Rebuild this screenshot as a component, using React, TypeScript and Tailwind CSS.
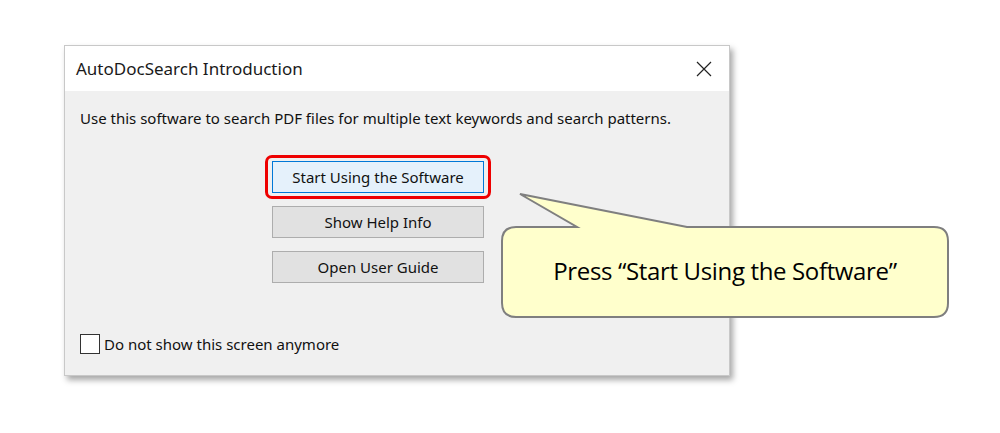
import React from 'react';

const ui = { fontFamily: '"Noto Sans", "Open Sans", sans-serif' };
const note = { fontFamily: '"Open Sans", "Noto Sans", sans-serif' };

function DialogButton({ label, focused }: { label: string; focused?: boolean }) {
  return (
    <button
      className={
        focused
          ? 'block h-[32px] w-[212px] border border-[#0078d7] bg-[#e5f1fb] text-[15px] text-[#111]'
          : 'block h-[32px] w-[212px] border border-[#adadad] bg-[#e1e1e1] text-[15px] text-[#111]'
      }
      style={ui}
    >
      {label}
    </button>
  );
}

export default function App() {
  return (
    <div className="relative h-[433px] w-[1000px] overflow-hidden bg-white" style={ui}>
      {/* dialog */}
      <div className="ml-[64px] pt-[45px]">
        <div className="flex h-[331px] w-[666px] flex-col border border-[#c8c8c8] bg-[#f0f0f0] shadow-[3px_4px_6px_rgba(0,0,0,0.35)]">
          <div className="flex h-[45px] shrink-0 items-center justify-between bg-white pl-[11px] pr-[17px]">
            <span className="text-[17px] text-[#1a1a1a]">AutoDocSearch Introduction</span>
            <svg width="16" height="16" viewBox="0 0 16 16">
              <path d="M1 1 L15 15 M15 1 L1 15" stroke="#222" strokeWidth="1.2" fill="none" />
            </svg>
          </div>
          <div className="flex flex-1 flex-col pl-[15px]">
            <p className="mt-[16px] text-[15px] leading-[22px] text-[#111]">
              Use this software to search PDF files for multiple text keywords and search patterns.
            </p>
            <div className="ml-[185px] mt-[26px] w-[226px] rounded-[7px] border-[3px] border-[#ee0000] px-[4px] py-[3px]">
              <DialogButton label="Start Using the Software" focused />
            </div>
            <div className="ml-[192px] mt-[7px] flex flex-col gap-[13px]">
              <DialogButton label="Show Help Info" />
              <DialogButton label="Open User Guide" />
            </div>
            <label className="mt-auto mb-[20px] flex items-center gap-[4px] text-[15px] text-[#111]">
              <span className="h-[20px] w-[20px] border border-[#333] bg-white" />
              Do not show this screen anymore
            </label>
          </div>
        </div>
      </div>

      {/* callout */}
      <div className="absolute left-[498px] top-[190px] h-[130px] w-[454px]">
        <svg width="454" height="130" viewBox="0 0 454 130" className="absolute left-0 top-0">
          <path
            d="M18 37 L79 37 L22 4 L189 37 L436 37 Q450 37 450 51 L450 113 Q450 127 436 127 L18 127 Q4 127 4 113 L4 51 Q4 37 18 37 Z"
            fill="#ffffcc"
            stroke="#7f7f7f"
            strokeWidth="2"
          />
        </svg>
        <div className="absolute left-[4px] top-[37px] flex h-[88px] w-[446px] items-center justify-center">
          <span className="text-[24px] tracking-[-0.35px] text-black" style={note}>
            Press “Start Using the Software”
          </span>
        </div>
      </div>
    </div>
  );
}
